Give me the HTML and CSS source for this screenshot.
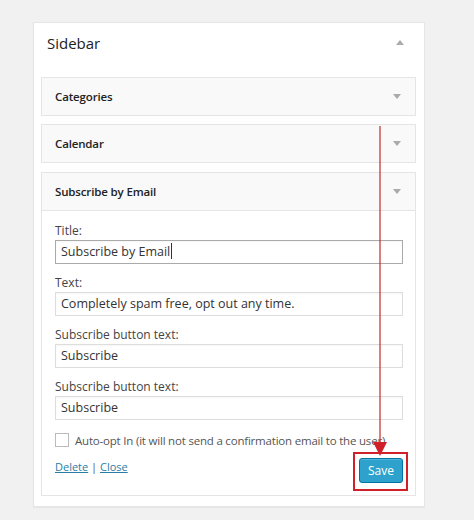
FILE: index.html
```html
<!DOCTYPE html>
<html>
<head>
<meta charset="utf-8">
<link rel="stylesheet" href="styles.css">
</head>
<body>
<div class="page">
  <div class="sidebar">
    <div class="sidebar-head">
      <span class="sidebar-title">Sidebar</span>
      <span class="tri tri-up"></span>
    </div>
    <div class="widget">
      <div class="widget-head"><span>Categories</span><span class="tri tri-down"></span></div>
    </div>
    <div class="widget">
      <div class="widget-head"><span>Calendar</span><span class="tri tri-down"></span></div>
    </div>
    <div class="widget open">
      <div class="widget-head"><span>Subscribe by Email</span><span class="tri tri-down"></span></div>
      <div class="widget-body">
        <div class="field">
          <label>Title:</label>
          <div class="input focused">Subscribe by Email<span class="caret"></span></div>
        </div>
        <div class="field">
          <label>Text:</label>
          <div class="input">Completely spam free, opt out any time.</div>
        </div>
        <div class="field">
          <label>Subscribe button text:</label>
          <div class="input">Subscribe</div>
        </div>
        <div class="field">
          <label>Subscribe button text:</label>
          <div class="input">Subscribe</div>
        </div>
        <div class="check-row">
          <span class="checkbox"></span>
          <span class="check-label">Auto-opt In (it will not send a confirmation email to the user)</span>
        </div>
        <div class="actions">
          <div class="links"><a href="#">Delete</a> <span class="sep">|</span> <a href="#">Close</a></div>
          <button class="save">Save</button>
        </div>
      </div>
    </div>
  </div>
  <svg class="annot-arrow" width="20" height="340" viewBox="0 0 20 340">
    <line x1="10" y1="0" x2="10" y2="322" stroke="#c0282d" stroke-width="1.2"/>
    <polygon points="3,316 17,316 10,330" fill="#d0212a"/>
  </svg>
  <div class="annot-box"></div>
</div>
</body>
</html>
```

FILE: styles.css
```css
html, body {
  margin: 0;
  padding: 0;
  background: #f1f1f1;
  font-family: "Open Sans", "DejaVu Sans", sans-serif;
  color: #444;
}
.page {
  position: relative;
  width: 474px;
  height: 520px;
  padding: 22px 0 0 33px;
  box-sizing: border-box;
}
.sidebar {
  width: 392px;
  height: 485px;
  box-sizing: border-box;
  background: #fff;
  border: 1px solid #e5e5e5;
  box-shadow: 0 1px 1px rgba(0,0,0,0.04);
}
.sidebar-head {
  display: flex;
  align-items: center;
  justify-content: space-between;
  height: 39px;
  padding: 0 20px 0 13px;
  margin-bottom: 15px;
}
.sidebar-title {
  font-size: 15px;
  color: #222;
}
.tri {
  width: 0;
  height: 0;
  border-left: 4px solid transparent;
  border-right: 4px solid transparent;
}
.tri-up { border-bottom: 5px solid #aaa; }
.tri-down { border-top: 5px solid #aaa; }
.widget {
  margin: 0 8px 8px 7px;
  border: 1px solid #e5e5e5;
  background: #f9f9f9;
}
.widget + .widget.open {
  margin-top: 9px;
}
.widget-head {
  display: flex;
  align-items: center;
  justify-content: space-between;
  height: 37px;
  padding: 0 14px 0 13px;
  font-size: 11.5px;
  letter-spacing: -0.15px;
  font-weight: 600;
  color: #222;
}
.open .widget-head {
  border-bottom: 1px solid #e5e5e5;
}
.widget-body {
  background: #fff;
  padding: 11px 12px 12px 13px;
}
.field {
  display: flex;
  flex-direction: column;
  margin-bottom: 10px;
}
.field label {
  font-size: 12px;
  line-height: 18px;
  color: #444;
}
.input {
  height: 24px;
  box-sizing: border-box;
  border: 1px solid #ddd;
  padding: 0 5px;
  font-size: 12.5px;
  line-height: 22px;
  color: #333;
  white-space: nowrap;
  overflow: hidden;
  box-shadow: inset 0 1px 2px rgba(0,0,0,0.04);
}
.input.focused {
  border-color: #aaa;
}
.caret {
  display: inline-block;
  width: 1px;
  height: 16px;
  background: #333;
  vertical-align: -3px;
  margin-left: 1px;
}
.check-row {
  display: flex;
  align-items: center;
  gap: 6px;
  margin-top: 4px;
  height: 20px;
}
.checkbox {
  width: 14px;
  height: 14px;
  box-sizing: border-box;
  border: 1px solid #bbb;
  background: #fff;
  flex: none;
}
.check-label {
  font-size: 11.5px;
  letter-spacing: -0.2px;
  color: #555;
  white-space: nowrap;
}
.actions {
  display: flex;
  justify-content: space-between;
  align-items: center;
  margin-top: 8px;
}
.links {
  font-size: 11px;
  color: #555;
  padding-bottom: 9px;
}
.links a {
  color: #2a7ea6;
  text-decoration: underline;
}
.sep { margin: 0; }
.save {
  width: 44px;
  height: 25px;
  background: #2ea2cc;
  border: 1px solid #0074a2;
  border-radius: 3px;
  color: #fff;
  font-family: "Open Sans", "DejaVu Sans", sans-serif;
  font-size: 12px;
  padding: 0;
  box-shadow: inset 0 1px 0 rgba(120,200,230,0.5);
}
.annot-arrow {
  position: absolute;
  left: 370px;
  top: 126px;
}
.annot-box {
  position: absolute;
  left: 353px;
  top: 452px;
  width: 55px;
  height: 39px;
  box-sizing: border-box;
  border: 2px solid #d0212a;
}
```
